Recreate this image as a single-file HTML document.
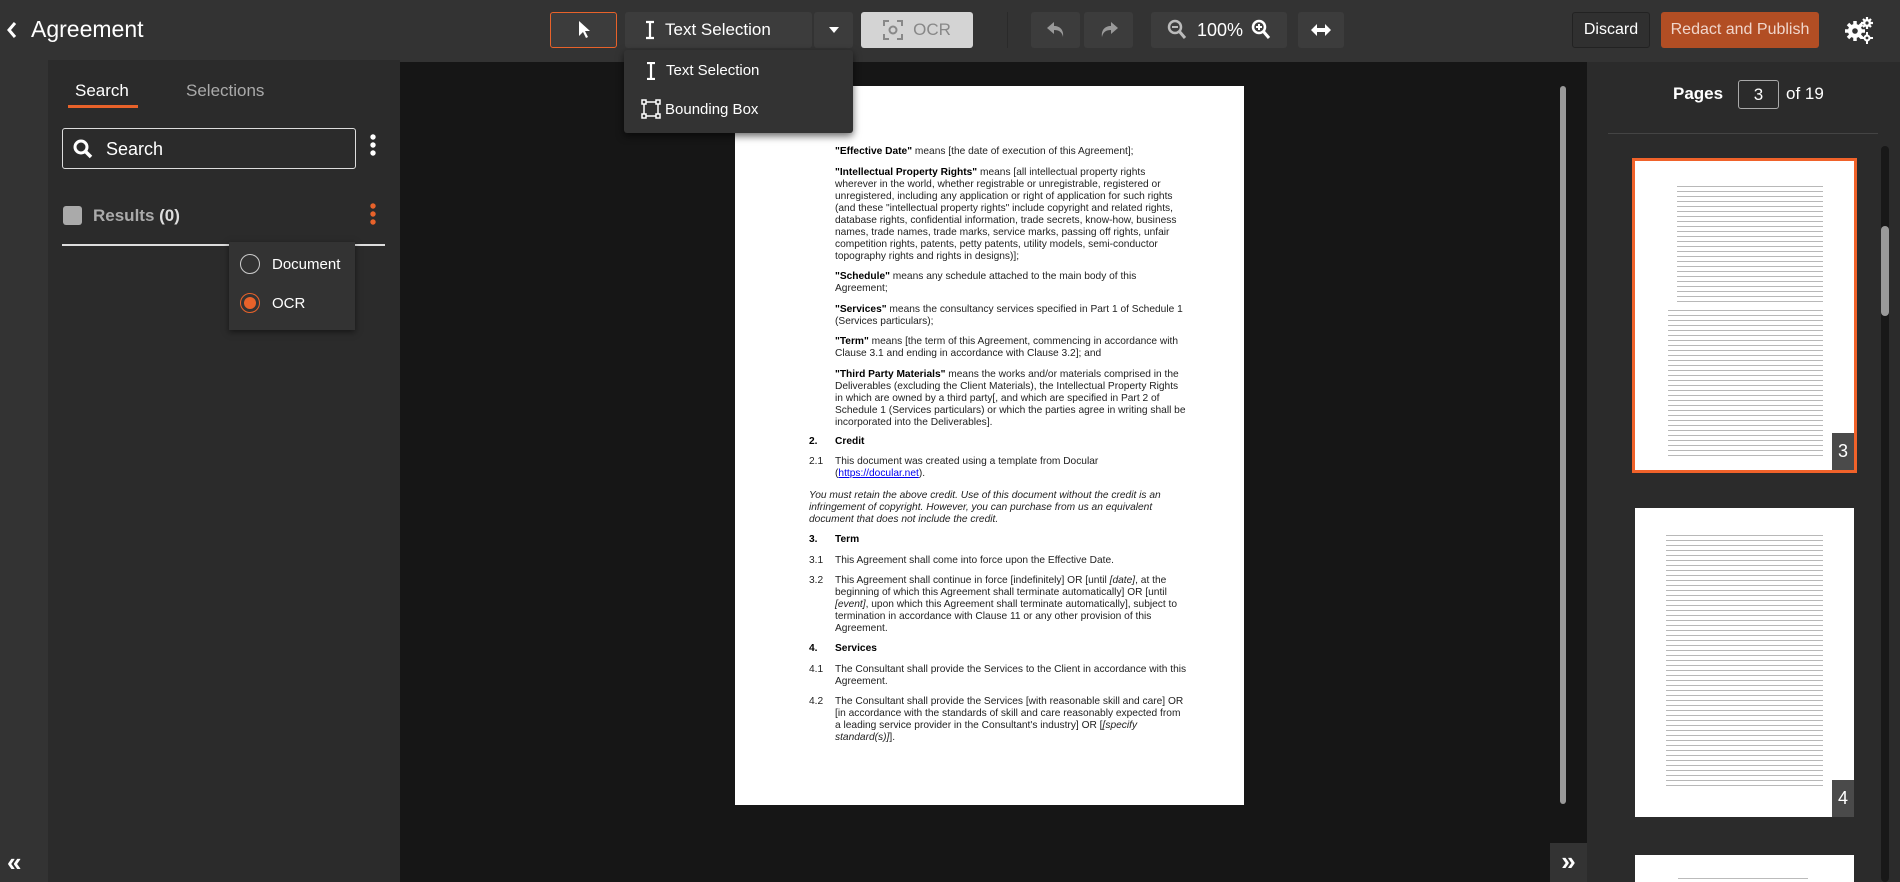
<!DOCTYPE html>
<html><head><meta charset="utf-8"><style>
*{box-sizing:border-box;margin:0;padding:0}
html{width:1900px;height:882px;overflow:hidden}
body{width:1900px;height:882px;overflow:hidden;background:#161616;font-family:"Liberation Sans",Arial,sans-serif;position:relative;color:#fff}
.a{position:absolute}
.top{left:0;top:0;width:1900px;height:62px;background:#333}
.btn{position:absolute;background:#3c3c3c;border-radius:3px;display:flex;align-items:center;justify-content:center;color:#fff;font-size:17px}
.doc{position:absolute;left:735px;top:86px;width:509px;height:719px;background:#fff;color:#222;font-family:"Liberation Sans",Arial,sans-serif;font-size:10.2px}
.l{position:absolute;white-space:nowrap;line-height:12px}
.l b{color:#000}
.th{position:absolute;background:#fff}
.stripes{position:absolute;background:repeating-linear-gradient(to bottom,#b8b8b8 0,#b8b8b8 1.2px,transparent 1.2px,transparent 5px)}
.lbl{position:absolute;background:#4a4a4a;color:#fff;font-size:18px;display:flex;align-items:center;justify-content:center}
</style></head><body>
<div class="a top"></div>
<svg class="a" style="left:6px;top:21px" width="12" height="18" viewBox="0 0 12 18"><path d="M9 2L3 9l6 7" stroke="#fff" stroke-width="3" fill="none"/></svg>
<div class="a" style="left:31px;top:16px;font-size:23px;color:#fff">Agreement</div>

<div class="btn" style="left:550px;top:12px;width:67px;height:36px;border:1.5px solid #e8622a"><svg width="14" height="20" viewBox="0 0 14 20"><path d="M2 1v15l4-4 3 6 2-1-3-6h5z" fill="#fff"/></svg></div>
<div class="btn" style="left:625px;top:12px;width:187px;height:36px;justify-content:flex-start;padding-left:20px"><svg width="10" height="20" viewBox="0 0 10 20" style="margin-right:10px"><path d="M1 2h8M1 18h8M5 2v16" stroke="#fff" stroke-width="2.2" fill="none"/></svg>Text Selection</div>
<div class="btn" style="left:814px;top:12px;width:39px;height:36px"><svg width="10" height="6"><path d="M0 0h10L5 6z" fill="#fff"/></svg></div>
<div class="btn" style="left:861px;top:12px;width:112px;height:36px;background:#d4d4d4;color:#888"><svg width="20" height="20" viewBox="0 0 20 20" style="margin-right:10px"><path d="M1 6V1h5M14 1h5v5M19 14v5h-5M6 19H1v-5" stroke="#888" stroke-width="2" fill="none"/><circle cx="10" cy="10" r="3.5" stroke="#888" stroke-width="2" fill="none"/></svg>OCR</div>
<div class="a" style="left:1007px;top:12px;width:1px;height:36px;background:#2a2a2a"></div>
<div class="btn" style="left:1031px;top:12px;width:49px;height:36px"><svg width="20" height="18" viewBox="0 0 20 18"><path d="M8 1L1 7l7 6V9c5 0 8 2 9 7 1-7-3-11-9-11z" fill="#999"/></svg></div>
<div class="btn" style="left:1084px;top:12px;width:49px;height:36px"><svg width="20" height="18" viewBox="0 0 20 18"><path d="M12 1l7 6-7 6V9c-5 0-8 2-9 7-1-7 3-11 9-11z" fill="#999"/></svg></div>
<div class="btn" style="left:1151px;top:12px;width:136px;height:36px;font-size:18px"><svg width="20" height="22" viewBox="0 0 20 22" style="margin-right:10px"><circle cx="8" cy="8" r="6" stroke="#bbb" stroke-width="2.5" fill="none"/><path d="M12 12l6 7" stroke="#bbb" stroke-width="3"/><path d="M5 8h6" stroke="#bbb" stroke-width="2"/></svg>100%<svg width="20" height="22" viewBox="0 0 20 22" style="margin-left:8px"><circle cx="8" cy="8" r="6" stroke="#fff" stroke-width="2.5" fill="none"/><path d="M12 12l6 7" stroke="#fff" stroke-width="3"/><path d="M5 8h6M8 5v6" stroke="#fff" stroke-width="2"/></svg></div>
<div class="btn" style="left:1298px;top:12px;width:46px;height:36px"><svg width="20" height="12" viewBox="0 0 20 12"><path d="M0 6l6-6v4h8V0l6 6-6 6V8H6v4z" fill="#fff"/></svg></div>
<div class="btn" style="left:1572px;top:12px;width:78px;height:36px;background:#303030;border:1px solid #222;font-size:16px">Discard</div>
<div class="btn" style="left:1661px;top:12px;width:158px;height:36px;background:#b24e24;color:#f0d6cc;font-size:16px">Redact and Publish</div>
<svg class="a" style="left:1844px;top:16px" width="30" height="28" viewBox="0 0 30 28"><g fill="#fff"><circle cx="11" cy="15" r="7"/><g stroke="#fff" stroke-width="3.5"><path d="M11 5v20M1 15h20M4 8l14 14M18 8L4 22"/></g><circle cx="23" cy="7" r="4"/><g stroke="#fff" stroke-width="2.2"><path d="M23 1v12M17 7h12M19 3l8 8M27 3l-8 8"/></g><circle cx="23" cy="22" r="3.5"/><g stroke="#fff" stroke-width="2"><path d="M23 16v12M17 22h12"/></g></g><circle cx="11" cy="15" r="2.8" fill="#333"/><circle cx="23" cy="7" r="1.6" fill="#333"/><circle cx="23" cy="22" r="1.4" fill="#333"/></svg>

<!-- left -->
<div class="a" style="left:0;top:62px;width:48px;height:820px;background:#333"></div>
<div class="a" style="left:48px;top:60px;width:352px;height:822px;background:#2b2b2b"></div>
<div class="a" style="left:75px;top:81px;font-size:17px">Search</div>
<div class="a" style="left:68px;top:105px;width:70px;height:3px;background:#e8622a"></div>
<div class="a" style="left:186px;top:81px;font-size:17px;color:#aaa">Selections</div>
<div class="a" style="left:62px;top:128px;width:294px;height:41px;border:1.5px solid #ddd;border-radius:3px"></div>
<svg class="a" style="left:73px;top:139px" width="20" height="20" viewBox="0 0 20 20"><circle cx="8" cy="8" r="6" stroke="#fff" stroke-width="3" fill="none"/><path d="M12 12l6 6" stroke="#fff" stroke-width="3.5"/></svg>
<div class="a" style="left:106px;top:139px;font-size:18px">Search</div>
<svg class="a" style="left:370px;top:134px" width="6" height="22"><circle cx="3" cy="3" r="2.7" fill="#fff"/><circle cx="3" cy="11" r="2.7" fill="#fff"/><circle cx="3" cy="19" r="2.7" fill="#fff"/></svg>
<div class="a" style="left:63px;top:206px;width:19px;height:19px;background:#aaa;border-radius:3px"></div>
<div class="a" style="left:93px;top:206px;font-size:17px;font-weight:bold;color:#aaa">Results <span style="color:#ddd">(0)</span></div>
<svg class="a" style="left:370px;top:203px" width="6" height="22"><circle cx="3" cy="3" r="2.7" fill="#e8622a"/><circle cx="3" cy="11" r="2.7" fill="#e8622a"/><circle cx="3" cy="19" r="2.7" fill="#e8622a"/></svg>
<div class="a" style="left:62px;top:244px;width:323px;height:1.5px;background:#ddd"></div>
<div class="a" style="left:229px;top:242px;width:126px;height:88px;background:#333;box-shadow:0 2px 6px rgba(0,0,0,.5)"></div>
<div class="a" style="left:240px;top:254px;width:20px;height:20px;border:1.5px solid #ccc;border-radius:50%"></div>
<div class="a" style="left:272px;top:256px;font-size:15px">Document</div>
<div class="a" style="left:240px;top:293px;width:20px;height:20px;border:1.5px solid #e8622a;border-radius:50%"></div>
<div class="a" style="left:244px;top:297px;width:12px;height:12px;background:#e8622a;border-radius:50%"></div>
<div class="a" style="left:272px;top:295px;font-size:15px">OCR</div>
<div class="a" style="left:7px;top:849px;font-size:26px;font-weight:bold;line-height:26px">«</div>

<!-- viewer -->
<div class="doc">
<div class="l" style="left:100px;top:60px"><b>"Effective Date"</b> means [the date of execution of this Agreement];</div>
<div class="l" style="left:100px;top:81px"><b>"Intellectual Property Rights"</b> means [all intellectual property rights<br>wherever in the world, whether registrable or unregistrable, registered or<br>unregistered, including any application or right of application for such rights<br>(and these "intellectual property rights" include copyright and related rights,<br>database rights, confidential information, trade secrets, know-how, business<br>names, trade names, trade marks, service marks, passing off rights, unfair<br>competition rights, patents, petty patents, utility models, semi-conductor<br>topography rights and rights in designs)];</div>
<div class="l" style="left:100px;top:185px"><b>"Schedule"</b> means any schedule attached to the main body of this<br>Agreement;</div>
<div class="l" style="left:100px;top:218px"><b>"Services"</b> means the consultancy services specified in Part 1 of Schedule 1<br>(Services particulars);</div>
<div class="l" style="left:100px;top:250px"><b>"Term"</b> means [the term of this Agreement, commencing in accordance with<br>Clause 3.1 and ending in accordance with Clause 3.2]; and</div>
<div class="l" style="left:100px;top:283px"><b>"Third Party Materials"</b> means the works and/or materials comprised in the<br>Deliverables (excluding the Client Materials), the Intellectual Property Rights<br>in which are owned by a third party[, and which are specified in Part 2 of<br>Schedule 1 (Services particulars) or which the parties agree in writing shall be<br>incorporated into the Deliverables].</div>
<div class="l" style="left:74px;top:350px"><b>2.</b></div><div class="l" style="left:100px;top:350px"><b>Credit</b></div>
<div class="l" style="left:74px;top:370px">2.1</div><div class="l" style="left:100px;top:370px">This document was created using a template from Docular<br>(<span style="color:#00e;text-decoration:underline">https://docular.net</span>).</div>
<div class="l" style="left:74px;top:404px;font-style:italic">You must retain the above credit. Use of this document without the credit is an<br>infringement of copyright. However, you can purchase from us an equivalent<br>document that does not include the credit.</div>
<div class="l" style="left:74px;top:448px"><b>3.</b></div><div class="l" style="left:100px;top:448px"><b>Term</b></div>
<div class="l" style="left:74px;top:469px">3.1</div><div class="l" style="left:100px;top:469px">This Agreement shall come into force upon the Effective Date.</div>
<div class="l" style="left:74px;top:489px">3.2</div><div class="l" style="left:100px;top:489px">This Agreement shall continue in force [indefinitely] OR [until <i>[date]</i>, at the<br>beginning of which this Agreement shall terminate automatically] OR [until<br><i>[event]</i>, upon which this Agreement shall terminate automatically], subject to<br>termination in accordance with Clause 11 or any other provision of this<br>Agreement.</div>
<div class="l" style="left:74px;top:557px"><b>4.</b></div><div class="l" style="left:100px;top:557px"><b>Services</b></div>
<div class="l" style="left:74px;top:578px">4.1</div><div class="l" style="left:100px;top:578px">The Consultant shall provide the Services to the Client in accordance with this<br>Agreement.</div>
<div class="l" style="left:74px;top:610px">4.2</div><div class="l" style="left:100px;top:610px">The Consultant shall provide the Services [with reasonable skill and care] OR<br>[in accordance with the standards of skill and care reasonably expected from<br>a leading service provider in the Consultant's industry] OR [<i>[specify<br>standard(s)]</i>].</div>
</div>
<div class="a" style="left:1560px;top:86px;width:6px;height:718px;background:#999;border-radius:3px"></div>
<div class="a" style="left:1550px;top:843px;width:37px;height:39px;background:#333;font-size:26px;font-weight:bold;text-align:center;line-height:36px">»</div>

<!-- dropdown -->
<div class="a" style="left:624px;top:50px;width:229px;height:83px;background:#333;border-radius:3px;box-shadow:0 3px 8px rgba(0,0,0,.6)"></div>
<svg class="a" style="left:646px;top:62px" width="10" height="18" viewBox="0 0 10 18"><path d="M1 1h8M1 17h8M5 1v16" stroke="#fff" stroke-width="2.2" fill="none"/></svg>
<div class="a" style="left:666px;top:62px;font-size:15px">Text Selection</div>
<svg class="a" style="left:641px;top:99px" width="20" height="20" viewBox="0 0 20 20"><rect x="3" y="3" width="14" height="14" stroke="#fff" stroke-width="1.5" fill="none"/><g fill="#333" stroke="#fff" stroke-width="1.5"><rect x="1" y="1" width="4" height="4"/><rect x="15" y="1" width="4" height="4"/><rect x="1" y="15" width="4" height="4"/><rect x="15" y="15" width="4" height="4"/></g></svg>
<div class="a" style="left:665px;top:101px;font-size:15px">Bounding Box</div>

<!-- right -->
<div class="a" style="left:1587px;top:62px;width:313px;height:820px;background:#2b2b2b"></div>
<div class="a" style="left:1673px;top:84px;font-size:17px;font-weight:bold">Pages</div>
<div class="a" style="left:1738px;top:80px;width:41px;height:29px;border:1px solid #aaa;border-radius:3px;font-size:17px;text-align:center;line-height:27px">3</div>
<div class="a" style="left:1786px;top:84px;font-size:17px">of 19</div>
<div class="a" style="left:1608px;top:133px;width:270px;height:1px;background:#444"></div>
<div class="a" style="left:1881px;top:146px;width:8px;height:736px;background:#181818;border-radius:4px"></div>
<div class="a" style="left:1881px;top:226px;width:8px;height:90px;background:#9a9a9a;border-radius:4px"></div>

<div class="th" style="left:1632px;top:158px;width:225px;height:315px;border:3.5px solid #f0622a"></div>
<div class="stripes" style="left:1677px;top:186px;width:146px;height:120px"></div>
<div class="stripes" style="left:1668px;top:310px;width:155px;height:148px"></div>
<div class="lbl" style="left:1832px;top:433px;width:22px;height:37px">3</div>

<div class="th" style="left:1635px;top:508px;width:219px;height:309px"></div>
<div class="stripes" style="left:1666px;top:535px;width:157px;height:255px"></div>
<div class="lbl" style="left:1832px;top:780px;width:22px;height:37px">4</div>

<div class="th" style="left:1635px;top:855px;width:219px;height:27px"></div>
<div class="a" style="left:1678px;top:878px;width:130px;height:1.3px;background:#bbb"></div>
</body></html>
